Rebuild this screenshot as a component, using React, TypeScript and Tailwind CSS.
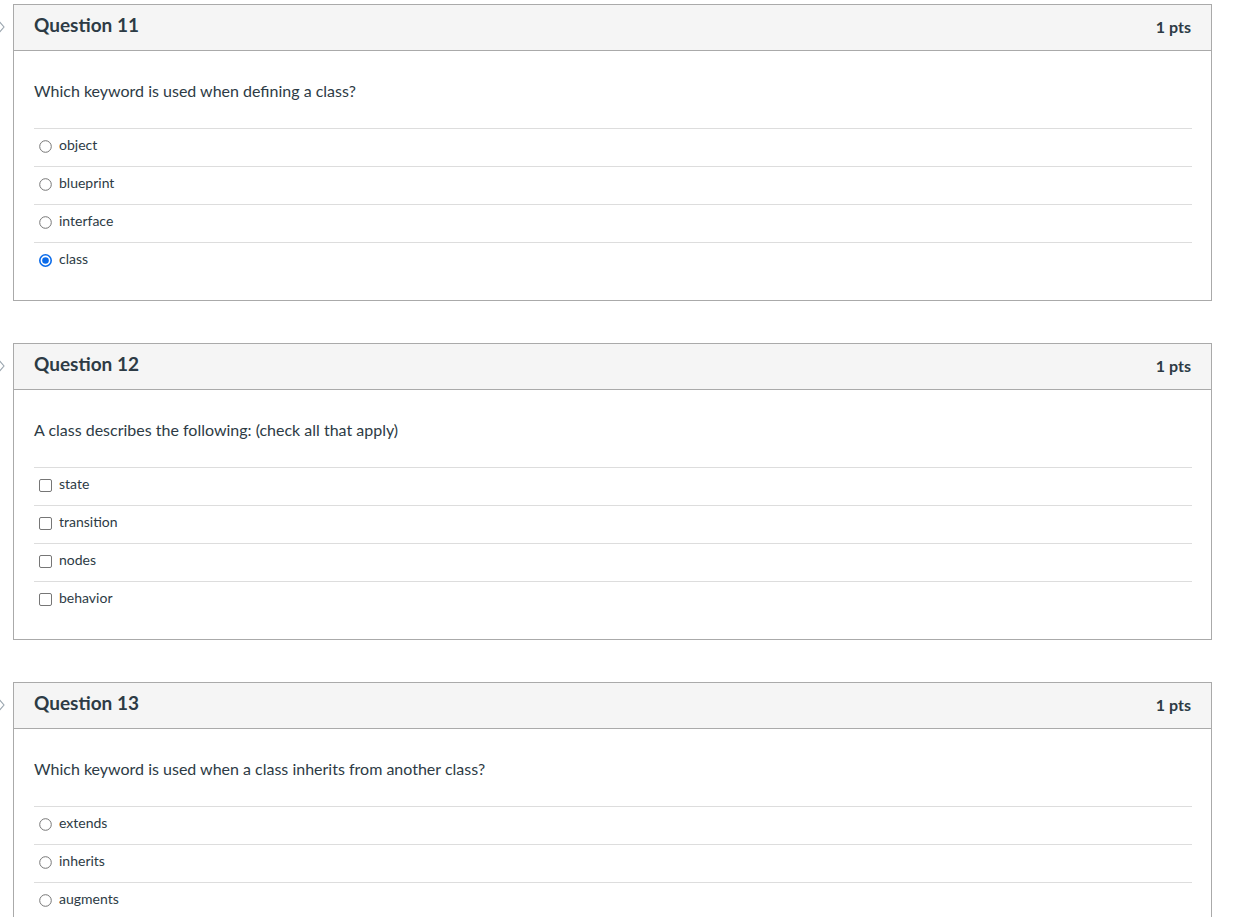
import React from "react";

type Q = { title: string; text: string; kind: "radio" | "check"; answers: string[]; selected?: number };

const questions: Q[] = [
  { title: "Question 11", text: "Which keyword is used when defining a class?", kind: "radio", answers: ["object", "blueprint", "interface", "class"], selected: 3 },
  { title: "Question 12", text: "A class describes the following: (check all that apply)", kind: "check", answers: ["state", "transition", "nodes", "behavior"] },
  { title: "Question 13", text: "Which keyword is used when a class inherits from another class?", kind: "radio", answers: ["extends", "inherits", "augments", "derives"] },
];

function Radio({ on }: { on: boolean }) {
  if (on) {
    return (
      <svg width="13" height="13" viewBox="0 0 13 13" className="shrink-0 mt-[5px]">
        <circle cx="6.5" cy="6.5" r="5.7" fill="white" stroke="#0b6bea" strokeWidth="1.6" />
        <circle cx="6.5" cy="6.5" r="3.3" fill="#0b6bea" />
      </svg>
    );
  }
  return (
    <svg width="13" height="13" viewBox="0 0 13 13" className="shrink-0 mt-[5px]">
      <circle cx="6.5" cy="6.5" r="5.8" fill="white" stroke="#767676" strokeWidth="1" />
    </svg>
  );
}

function Check() {
  return <div className="w-[13px] h-[13px] mt-[5px] shrink-0 rounded-[2px] border border-[#767676] bg-white" />;
}

function Card({ q }: { q: Q }) {
  return (
    <div className="flex">
      <div className="w-[13px] shrink-0 pt-[17px]">
        <svg width="6" height="12" viewBox="0 0 6 12" className="-ml-[1px]">
          <path d="M0.5 0.8 L5 6 L0.5 11.2" fill="none" stroke="#9aa5ae" strokeWidth="1.1" />
        </svg>
      </div>
      <div className="w-[1199px] shrink-0 border border-[#aaaaaa] bg-white">
        <div className="h-[46px] bg-[#f5f5f5] border-b border-[#aaaaaa] flex items-start justify-between pt-[10px] pl-[20px] pr-[20px]">
          <span className="text-[19px] font-bold text-[#2d3b45] leading-[19px]">{q.title}</span>
          <span className="text-[16px] font-bold text-[#2d3b45] leading-[16px] mt-[4px]">1 pts</span>
        </div>
        <div className="pl-[20px] pr-[19px] pt-[28px] pb-[20px]">
          <div className="text-[16px] leading-[24px] text-[#2d3b45]">{q.text}</div>
          <div className="mt-[25px]">
            {q.answers.map((a, i) => (
              <div key={a} className="h-[38px] border-t border-[#dddddd] flex items-start pt-[6px] pl-[5px] gap-[7px]">
                {q.kind === "radio" ? <Radio on={q.selected === i} /> : <Check />}
                <span className="text-[14px] leading-[20px] text-[#2d3b45]">{a}</span>
              </div>
            ))}
          </div>
        </div>
      </div>
    </div>
  );
}

export default function App() {
  return (
    <div className="w-[1258px] h-[917px] overflow-hidden bg-white pt-[4px]" style={{ fontFamily: "Lato, 'Noto Sans', sans-serif" }}>
      <div className="flex flex-col gap-[42px]">
        {questions.map((q) => (
          <Card key={q.title} q={q} />
        ))}
      </div>
    </div>
  );
}
